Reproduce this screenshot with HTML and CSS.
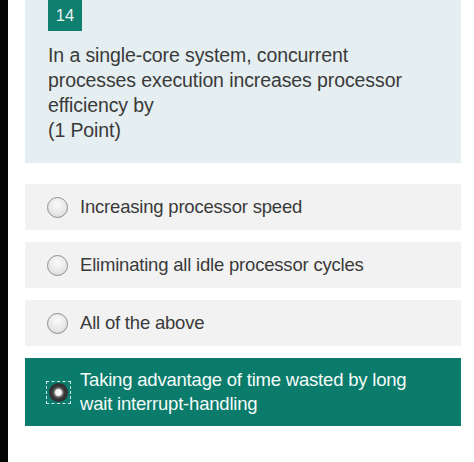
FILE: index.html
```html
<!DOCTYPE html>
<html>
<head>
<meta charset="utf-8">
<link rel="stylesheet" href="styles.css">
</head>
<body>
<div class="page">
  <div class="edge"></div>
  <main class="content">
    <section class="question">
      <div class="badge">14</div>
      <p class="qtext">In a single-core system, concurrent processes execution increases processor efficiency by<br>(1 Point)</p>
    </section>
    <div class="options">
      <label class="option"><span class="radio"></span><span class="otext">Increasing processor speed</span></label>
      <label class="option"><span class="radio"></span><span class="otext">Eliminating all idle processor cycles</span></label>
      <label class="option"><span class="radio"></span><span class="otext">All of the above</span></label>
      <label class="option selected"><span class="focus"><span class="radio checked"></span></span><span class="otext">Taking advantage of time wasted by long wait interrupt-handling</span></label>
    </div>
  </main>
</div>
</body>
</html>
```

FILE: styles.css
```css
* { box-sizing: border-box; }
html, body { margin: 0; padding: 0; background: #fff; }
body {
  font-family: "Liberation Sans", Arial, sans-serif;
  color: #383838;
  width: 474px;
  height: 462px;
  overflow: hidden;
}
.page {
  display: flex;
  height: 462px;
}
.edge {
  width: 8px;
  background: #050505;
  flex: none;
}
.content {
  padding-left: 17px;
  width: 453px;
}
.question {
  width: 436px;
  background: #e5eef0;
  padding: 0 20px 20px 23px;
}
.badge {
  display: inline-flex;
  align-items: center;
  justify-content: center;
  width: 34px;
  height: 31px;
  background: #0f7f6f;
  color: #e8f4f1;
  font-size: 16.5px;
}
.qtext {
  margin: 12px 0 0;
  font-size: 19.5px;
  line-height: 25px;
  color: #3a3a3a;
  letter-spacing: -0.1px;
}
.options {
  margin-top: 21px;
  display: flex;
  flex-direction: column;
  gap: 12px;
  width: 436px;
}
.option {
  display: flex;
  align-items: center;
  min-height: 46px;
  padding: 10px 20px 10px 23px;
  background: #f2f2f2;
  font-size: 18.5px;
  letter-spacing: -0.2px;
  line-height: 24px;
  color: #3a3a3a;
}
.radio {
  flex: none;
  width: 21px;
  height: 21px;
  border-radius: 50%;
  border: 1.5px solid #8e8e8e;
  background: radial-gradient(circle at 50% 35%, #fbfbfb 0%, #e6e6e6 60%, #cfcfcf 100%);
  margin-left: -1px;
  margin-right: 12px;
}
.option.selected {
  background: #0b7b6b;
  color: #f4fbf9;
}
.focus {
  flex: none;
  display: flex;
  align-items: center;
  justify-content: center;
  width: 25px;
  height: 23px;
  margin-left: -2px;
  margin-right: 9px;
  border: 1.5px dashed #d8ece7;
}
.radio.checked {
  margin: 0;
  width: 19px;
  height: 19px;
  border: none;
  background: radial-gradient(circle at 50% 50%, #f4f4f4 0 3px, #8a8a8a 4px, #3a3a3a 6px, #1e1e1e 100%);
}
```
